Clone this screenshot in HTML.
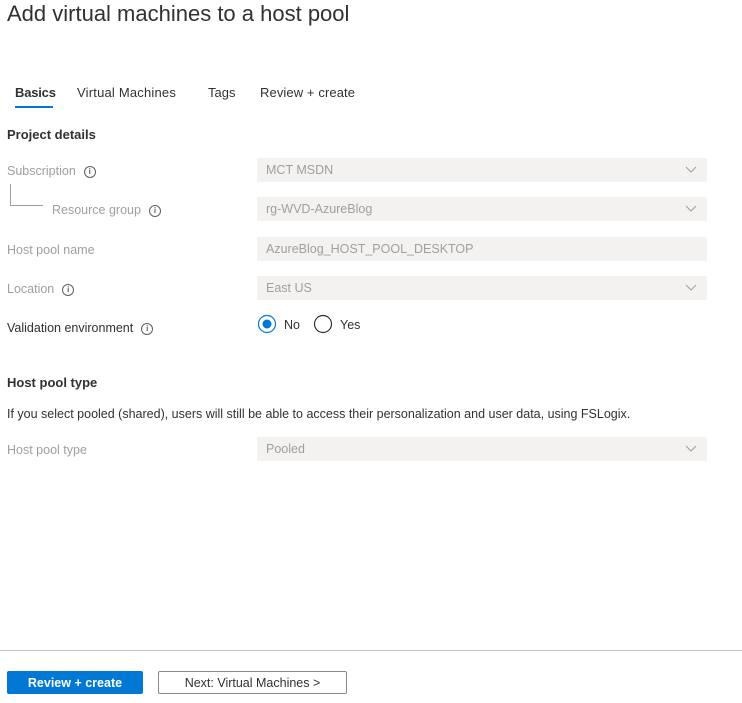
<!DOCTYPE html>
<html><head><style>
body{margin:0;width:742px;height:703px;background:#fff;font-family:"Liberation Sans",sans-serif;position:relative;overflow:hidden;color:#323130}
.a{position:absolute;white-space:nowrap}
.lbl{font-size:12.5px;color:#a19f9d}
.box{position:absolute;left:257px;width:450px;height:24px;background:#f3f2f1;border-radius:2px;font-size:12.5px;color:#a19f9d;line-height:25px;text-indent:9px}
.chev{position:absolute;right:10px;top:8px}
.i{display:inline-block;width:10px;height:10px;border:1px solid #605e5c;border-radius:50%;font-size:8px;line-height:10px;text-align:center;color:#605e5c;vertical-align:middle;margin-left:8px;font-weight:bold}
.tab{font-size:13px;top:85px}
h3{margin:0;font-size:13px;font-weight:bold;position:absolute}
</style></head><body>
<div class="a" style="left:7px;top:1px;font-size:22px;color:#323130">Add virtual machines to a host pool</div>
<div class="a tab" style="left:15px;font-weight:bold;letter-spacing:-0.2px">Basics</div>
<div style="position:absolute;left:15px;top:106px;width:38px;height:2px;background:#0078d4"></div>
<div class="a tab" style="left:77px;letter-spacing:0.2px">Virtual Machines</div>
<div class="a tab" style="left:208px">Tags</div>
<div class="a tab" style="left:260px;letter-spacing:0.1px">Review + create</div>
<h3 style="left:7px;top:127px">Project details</h3>
<div class="a lbl" style="left:7px;top:164px">Subscription<span class="i">i</span></div>
<div style="position:absolute;left:10px;top:184px;width:32px;height:21px;border-left:1px solid #a19f9d;border-bottom:1px solid #a19f9d"></div>
<div class="a lbl" style="left:52px;top:203px">Resource group<span class="i">i</span></div>
<div class="a lbl" style="left:7px;top:243px">Host pool name</div>
<div class="a lbl" style="left:7px;top:282px">Location<span class="i">i</span></div>
<div class="a" style="left:7px;top:321px;font-size:12.5px">Validation environment<span class="i">i</span></div>
<div class="box" style="top:158px">MCT MSDN<svg class="chev" width="12" height="8"><path d="M1 1l5 5 5-5" stroke="#a19f9d" fill="none"/></svg></div>
<div class="box" style="top:197px">rg-WVD-AzureBlog<svg class="chev" width="12" height="8"><path d="M1 1l5 5 5-5" stroke="#a19f9d" fill="none"/></svg></div>
<div class="box" style="top:237px">AzureBlog_HOST_POOL_DESKTOP</div>
<div class="box" style="top:276px">East US<svg class="chev" width="12" height="8"><path d="M1 1l5 5 5-5" stroke="#a19f9d" fill="none"/></svg></div>
<svg class="a" style="left:257px;top:314px" width="20" height="20"><circle cx="10" cy="10" r="8.5" fill="none" stroke="#0078d4" stroke-width="1.2"/><circle cx="10" cy="10" r="4.5" fill="#0078d4"/></svg>
<div class="a" style="left:284px;top:318px;font-size:12.5px">No</div>
<svg class="a" style="left:313px;top:314px" width="20" height="20"><circle cx="10" cy="10" r="8.5" fill="none" stroke="#323130" stroke-width="1.2"/></svg>
<div class="a" style="left:340px;top:318px;font-size:12.5px">Yes</div>
<h3 style="left:7px;top:375px">Host pool type</h3>
<div class="a" style="left:7px;top:407px;font-size:12.5px">If you select pooled (shared), users will still be able to access their personalization and user data, using FSLogix.</div>
<div class="a lbl" style="left:7px;top:443px">Host pool type</div>
<div class="box" style="top:437px">Pooled<svg class="chev" width="12" height="8"><path d="M1 1l5 5 5-5" stroke="#a19f9d" fill="none"/></svg></div>
<div style="position:absolute;left:0;top:650px;width:742px;height:1px;background:#c8c6c4"></div>
<div class="a" style="left:7px;top:671px;width:136px;height:23px;background:#0078d4;border-radius:2px;color:#fff;font-size:12.5px;font-weight:bold;text-align:center;line-height:24px">Review + create</div>
<div class="a" style="left:158px;top:671px;width:187px;height:21px;border:1px solid #8a8886;border-radius:2px;font-size:12.5px;text-align:center;line-height:22px">Next: Virtual Machines &gt;</div>
</body></html>
